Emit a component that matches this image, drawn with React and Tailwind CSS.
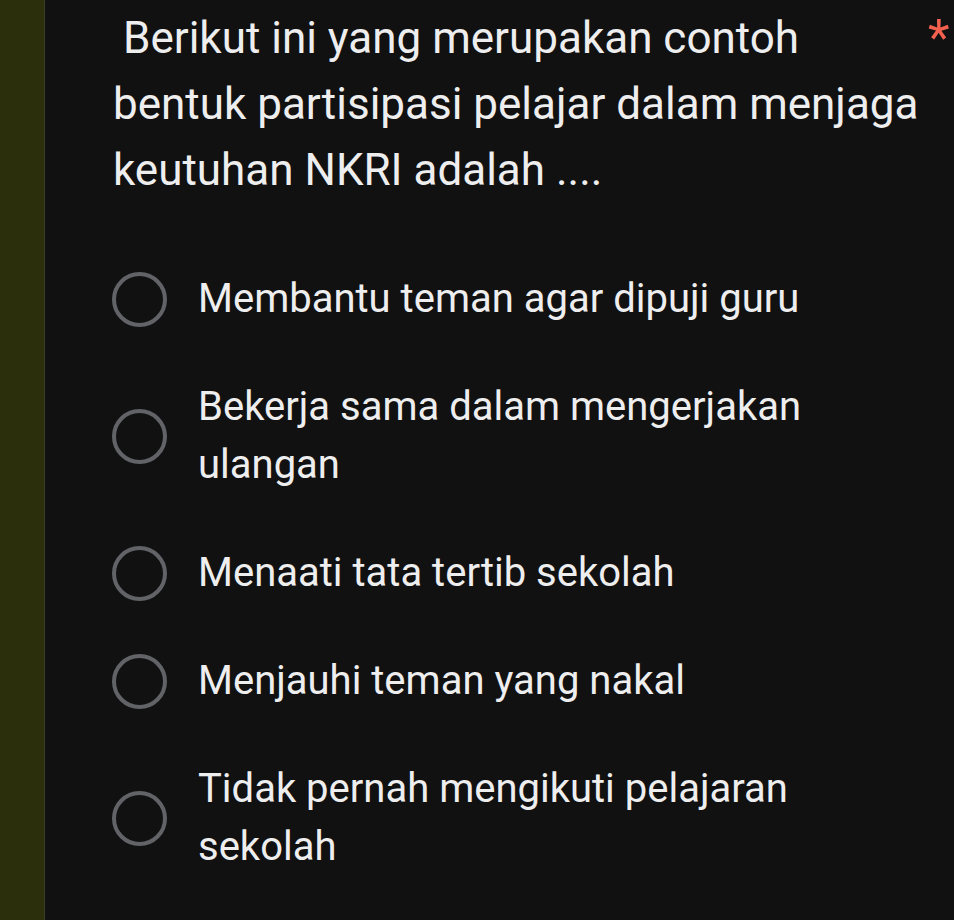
import React from 'react';

const options = [
  'Membantu teman agar dipuji guru',
  'Bekerja sama dalam mengerjakan ulangan',
  'Menaati tata tertib sekolah',
  'Menjauhi teman yang nakal',
  'Tidak pernah mengikuti pelajaran sekolah',
];

export default function App() {
  return (
    <div className="flex min-h-[920px] w-full bg-[#111112] text-[#eeeeef]" style={{ fontFamily: 'Roboto, "Noto Sans", sans-serif' }}>
      {/* side strip */}
      <div className="w-[45px] shrink-0 bg-[#2c2f0b] border-r border-[#3b3d26]" />

      <div className="flex-1 pt-[5px]">
        {/* question */}
        <div className="flex items-start pl-[68px]">
          <h1 className="w-[810px] text-[44px] leading-[66px] font-normal indent-[10px]">
            Berikut ini yang merupakan contoh bentuk partisipasi pelajar dalam menjaga keutuhan NKRI adalah ....
          </h1>
          <span className="ml-[5px] text-[50px] leading-[66px] text-[#f2604e]">*</span>
        </div>

        {/* choices */}
        <div className="mt-[67px] flex flex-col gap-[50px] pl-[67px]">
          {options.map((opt) => (
            <label key={opt} className="flex items-center gap-[31px] cursor-pointer">
              <span className="w-[55px] h-[55px] shrink-0 rounded-full border-[4px] border-[#626367]" />
              <span className="w-[690px] text-[40px] leading-[58px]">{opt}</span>
            </label>
          ))}
        </div>
      </div>
    </div>
  );
}
